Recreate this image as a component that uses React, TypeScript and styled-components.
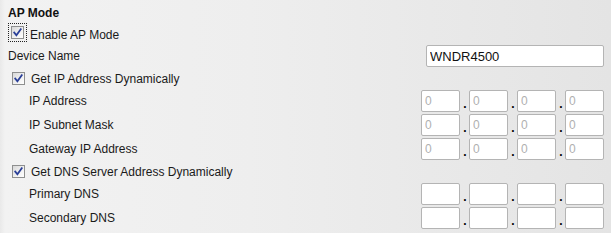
import React from "react";
import styled, { createGlobalStyle } from "styled-components";

const GlobalStyle = createGlobalStyle`
    html, body {
        margin: 0;
        padding: 0;
    }
    body {
        font-family: "Liberation Sans", Arial, sans-serif;
        font-size: 12px;
        color: #1a1a1a;
    }
`;

const Page = styled.div`
    width: 611px;
    height: 233px;
    box-sizing: border-box;
    padding: 1px 7px 0 8px;
    background: linear-gradient(
        to right,
        #e9e9e9 0px,
        #f2f2f2 5px,
        #eeeeee 250px,
        #e4e4e4 611px
    );
    display: flex;
    flex-direction: column;
`;

const Title = styled.div`
    height: 23px;
    display: flex;
    align-items: center;
    font-weight: bold;
    color: #111;
`;

const Row = styled.div<{ $h: number }>`
    height: ${(p) => p.$h}px;
    display: flex;
    align-items: center;
    justify-content: space-between;
`;

const Group = styled.div`
    display: flex;
    flex-direction: column;
    gap: 2px;
`;

const CheckLabel = styled.label<{ $indent: number; $gap: number }>`
    display: flex;
    align-items: center;
    gap: ${(p) => p.$gap}px;
    padding-left: ${(p) => p.$indent}px;
    cursor: pointer;
`;

const FocusRing = styled.span`
    display: flex;
    padding: 2px;
    border: 1px dotted #222;
    margin-bottom: 4px;
`;

const Box = styled.span`
    width: 13px;
    height: 13px;
    box-sizing: border-box;
    border: 1px solid #8e8f8f;
    background: linear-gradient(135deg, #d8d8d8 0%, #f2f2f2 60%, #ffffff 100%);
    display: flex;
    align-items: center;
    justify-content: center;
`;

const Label = styled.span<{ $indent?: number }>`
    padding-left: ${(p) => p.$indent ?? 0}px;
`;

const TextInput = styled.input`
    width: 178px;
    height: 22px;
    box-sizing: border-box;
    border: 1px solid #b4b4b4;
    border-radius: 2px;
    background: #fff;
    padding: 0 3px;
    font-family: "Liberation Sans", Arial, sans-serif;
    font-size: 13px;
    color: #111;
    outline: none;
`;

const IpFields = styled.div`
    display: flex;
    align-items: center;
`;

const Octet = styled.input`
    width: 39px;
    height: 22px;
    box-sizing: border-box;
    border: 1px solid #b4b4b4;
    border-radius: 2px;
    background: #fff;
    padding: 0 3px;
    font-family: "Liberation Sans", Arial, sans-serif;
    font-size: 12px;
    color: #111;
    outline: none;
    &::placeholder {
        color: #b0b0b0;
    }
`;

const Dot = styled.span`
    width: 9px;
    text-align: center;
    font-weight: bold;
    font-size: 12px;
    color: #000;
    padding-top: 5px;
    padding-left: 1px;
    box-sizing: border-box;
`;

const Check = () => (
    <Box>
        <svg width="9" height="9" viewBox="0 0 9 9">
            <path
                d="M1.2 4.6 L3.4 7.2 L7.8 1.2"
                fill="none"
                stroke="#2a3f98"
                strokeWidth="1.8"
                strokeLinecap="square"
            />
        </svg>
    </Box>
);

const IpInput = ({ placeholder }: { placeholder?: string }) => (
    <IpFields>
        {[0, 1, 2, 3].map((i) => (
            <React.Fragment key={i}>
                {i > 0 && <Dot>.</Dot>}
                <Octet placeholder={placeholder} />
            </React.Fragment>
        ))}
    </IpFields>
);

const App: React.FC = () => {
    return (
        <>
            <GlobalStyle />
            <Page>
                <Title>AP Mode</Title>
                <Row $h={21}>
                    <CheckLabel $indent={0} $gap={3}>
                        <FocusRing>
                            <Check />
                        </FocusRing>
                        <span>Enable AP Mode</span>
                    </CheckLabel>
                </Row>
                <Row $h={22}>
                    <Label>Device Name</Label>
                    <TextInput defaultValue="WNDR4500" />
                </Row>
                <Row $h={23}>
                    <CheckLabel $indent={4} $gap={6}>
                        <Check />
                        <span>Get IP Address Dynamically</span>
                    </CheckLabel>
                </Row>
                <Group>
                    <Row $h={22}>
                        <Label $indent={21}>IP Address</Label>
                        <IpInput placeholder="0" />
                    </Row>
                    <Row $h={22}>
                        <Label $indent={21}>IP Subnet Mask</Label>
                        <IpInput placeholder="0" />
                    </Row>
                    <Row $h={22}>
                        <Label $indent={21}>Gateway IP Address</Label>
                        <IpInput placeholder="0" />
                    </Row>
                </Group>
                <Row $h={23}>
                    <CheckLabel $indent={4} $gap={6}>
                        <Check />
                        <span>Get DNS Server Address Dynamically</span>
                    </CheckLabel>
                </Row>
                <Group>
                    <Row $h={22}>
                        <Label $indent={21}>Primary DNS</Label>
                        <IpInput />
                    </Row>
                    <Row $h={22}>
                        <Label $indent={21}>Secondary DNS</Label>
                        <IpInput />
                    </Row>
                </Group>
            </Page>
        </>
    );
};

export default App;
